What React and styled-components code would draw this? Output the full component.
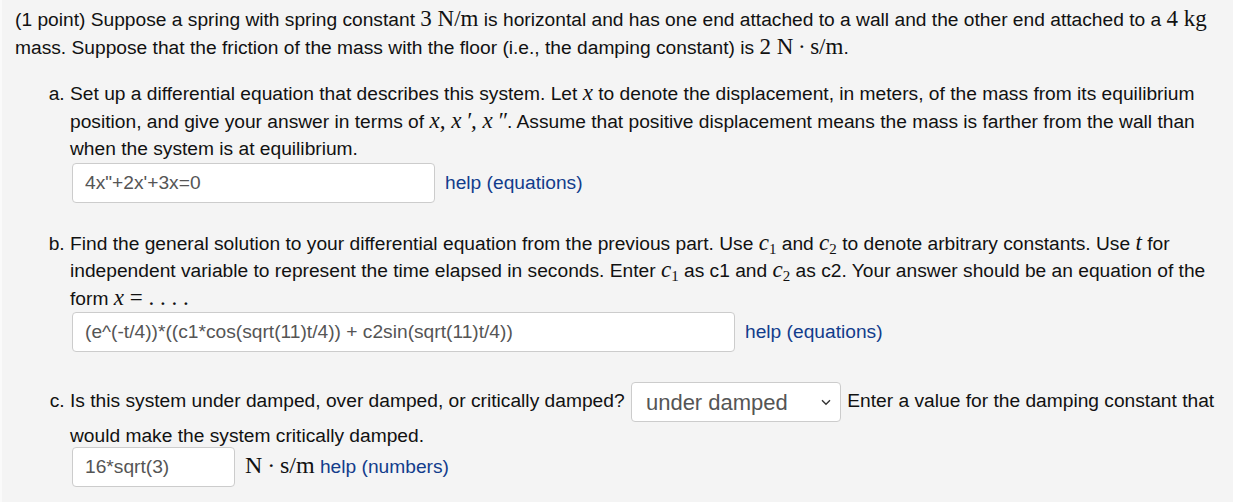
import styled, { createGlobalStyle } from 'styled-components';

const GlobalStyle = createGlobalStyle`
	html, body {
		margin: 0;
		padding: 0;
		background: #f4f4f4;
	}
	body {
		font-family: "Liberation Sans", Arial, sans-serif;
		color: #111;
	}
`;

const Problem = styled.div`
	box-sizing: border-box;
	width: 1233px;
	min-height: 502px;
	padding: 6px 6px 0 13px;
	border-left: 2px solid #fafafa;
	font-size: 19.2px;
	line-height: 27.5px;
`;

const Intro = styled.p`
	margin: 0 0 19px;
`;

const Parts = styled.ol`
	list-style: lower-alpha;
	margin: 0;
	padding-left: 55px;
`;

const Part = styled.li`
	margin-bottom: ${(p) => p.$gap || 27}px;
`;

const Text = styled.div`
	margin-bottom: ${(p) => (p.$tight ? '-3px' : '0')};
`;

// MathJax-ish bits
const M = styled.span`
	font-family: "Liberation Serif", "Times New Roman", serif;
	font-size: 23px;
	line-height: 1;
	font-style: ${(p) => (p.$i ? 'italic' : 'normal')};
	white-space: nowrap;
`;

const Sub = styled.sub`
	font-size: 15px;
	font-style: normal;
	vertical-align: -4px;
	line-height: 0;
`;

const AnswerRow = styled.div`
	display: flex;
	align-items: center;
	gap: 10px;
	padding-left: 2px;
`;

const Answer = styled.input`
	box-sizing: border-box;
	width: ${(p) => p.$w}px;
	height: 40px;
	padding: 0 12px;
	border: 1px solid #ccc;
	border-radius: 4px;
	background: #fff;
	font-family: "Liberation Sans", Arial, sans-serif;
	font-size: 19.2px;
	color: #555;
	outline: none;
`;

const Help = styled.a`
	color: #123c8c;
	text-decoration: none;
	cursor: pointer;
`;

const Unit = styled.span`
	font-family: "Liberation Serif", "Times New Roman", serif;
	font-size: 24px;
	color: #111;
`;

const SelectWrap = styled.span`
	position: relative;
	display: inline-block;
	vertical-align: middle;
	margin: 0 1px;
`;

const Select = styled.select`
	box-sizing: border-box;
	width: 210px;
	height: 40px;
	padding: 0 30px 0 14px;
	border: 1px solid #ccc;
	border-radius: 4px;
	background: #fff;
	font-family: "Liberation Sans", Arial, sans-serif;
	font-size: 22px;
	color: #555;
	appearance: none;
	outline: none;
`;

const Chevron = styled.svg`
	position: absolute;
	right: 10px;
	top: 17px;
	pointer-events: none;
`;

const x = <M $i>x</M>;

export default function App() {
	return (
		<>
			<GlobalStyle />
			<Problem>
				<Intro>
					(1 point) Suppose a spring with spring constant <M>3&nbsp;N/m</M> is horizontal and has one end
					attached to a wall and the other end attached to a <M>4&nbsp;kg</M> mass. Suppose that the friction of
					the mass with the floor (i.e., the damping constant) is <M>2&nbsp;N&thinsp;·&thinsp;s/m</M>.
				</Intro>
				<Parts>
					<Part>
						<Text>
							Set up a differential equation that describes this system. Let {x} to denote the displacement, in
							meters, of the mass from its equilibrium position, and give your answer in terms of{' '}
							<M $i>x, x&thinsp;′, x&thinsp;″</M>. Assume that positive displacement means the mass is farther from
							the wall than when the system is at equilibrium.
						</Text>
						<AnswerRow>
							<Answer $w={363} defaultValue={'4x"+2x\'+3x=0'} />
							<Help>help (equations)</Help>
						</AnswerRow>
					</Part>
					<Part $gap={30}>
						<Text>
							Find the general solution to your differential equation from the previous part. Use{' '}
							<M $i>c<Sub>1</Sub></M> and <M $i>c<Sub>2</Sub></M> to denote arbitrary constants. Use <M $i>t</M> for
							independent variable to represent the time elapsed in seconds. Enter <M $i>c<Sub>1</Sub></M> as c1 and{' '}
							<M $i>c<Sub>2</Sub></M> as c2. Your answer should be an equation of the form{' '}
							<M>
								<i>x</i> = . . . .
							</M>
						</Text>
						<AnswerRow>
							<Answer $w={663} defaultValue="(e^(-t/4))*((c1*cos(sqrt(11)t/4)) + c2sin(sqrt(11)t/4))" />
							<Help>help (equations)</Help>
						</AnswerRow>
					</Part>
					<Part>
						<Text $tight>
							Is this system under damped, over damped, or critically damped?{' '}
							<SelectWrap>
								<Select defaultValue="under">
									<option value="?">?</option>
									<option value="under">under damped</option>
									<option value="over">over damped</option>
									<option value="crit">critically damped</option>
								</Select>
								<Chevron width="10" height="7" viewBox="0 0 10 7">
									<path d="M1 1.2 L5 5.2 L9 1.2" fill="none" stroke="#333" strokeWidth="1.4" />
								</Chevron>
							</SelectWrap>{' '}
							Enter a value for the damping constant that would make the system critically damped.
						</Text>
						<AnswerRow>
							<Answer $w={163} defaultValue="16*sqrt(3)" />
							<span>
								<Unit>N&thinsp;·&thinsp;s/m</Unit> <Help>help (numbers)</Help>
							</span>
						</AnswerRow>
					</Part>
				</Parts>
			</Problem>
		</>
	);
}
